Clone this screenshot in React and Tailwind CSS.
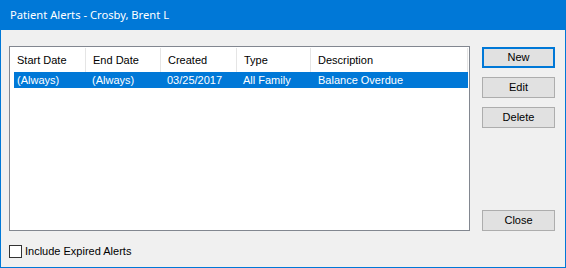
import React from 'react';

// Classic WinForms-style "Patient Alerts" dialog
const columns = [
  { key: 'start', label: 'Start Date', w: 'w-[76px]' },
  { key: 'end', label: 'End Date', w: 'w-[75px]' },
  { key: 'created', label: 'Created', w: 'w-[76px]' },
  { key: 'type', label: 'Type', w: 'w-[74px]' },
  { key: 'desc', label: 'Description', w: 'w-[157px]' },
];

const rows = [
  { start: '(Always)', end: '(Always)', created: '03/25/2017', type: 'All Family', desc: 'Balance Overdue' },
];

function DlgButton({ children, primary = false }) {
  return (
    <button
      type="button"
      className={
        primary
          ? 'flex h-[21px] w-[73px] items-center justify-center border-2 border-[#0078d7] bg-[#e1e1e1] text-[11px] text-black'
          : 'flex h-[21px] w-[73px] items-center justify-center border border-[#adadad] bg-[#e1e1e1] text-[11px] text-black'
      }
    >
      {children}
    </button>
  );
}

export default function App() {
  return (
    <div
      className="flex h-[268px] w-[566px] flex-col border-x border-b border-[#0078d7] bg-[#f0f0f0]"
      style={{ fontFamily: '"Liberation Sans", Arial, sans-serif' }}
    >
      {/* title bar */}
      <div
        className="-mx-px flex h-[30px] shrink-0 items-center bg-[#0078d7] pl-[10px] text-[11.2px] text-white"
        style={{ fontFamily: '"Noto Sans", "Open Sans", sans-serif' }}
      >
        Patient Alerts - Crosby, Brent L
      </div>

      <div className="flex flex-1 pl-[8px] pt-[16px]">
        <div className="flex flex-col">
          {/* list view */}
          <div className="h-[185px] w-[461px] border border-[#828790] bg-white">
            <div className="flex h-[25px] items-center pt-[1px]">
              {columns.map((c) => (
                <div
                  key={c.key}
                  className={`${c.w} flex h-full items-center border-r border-[#e5e5e5] pl-[7px] text-[11px] text-black`}
                >
                  {c.label}
                </div>
              ))}
            </div>
            {rows.map((r, i) => (
              <div key={i} className="ml-[4px] mr-[1px] flex h-[16px] items-center bg-[#0078d7] text-[11px] text-white">
                <div className="w-[72px] pl-[3px]">{r.start}</div>
                <div className="w-[75px] pl-[6px]">{r.end}</div>
                <div className="w-[76px] pl-[6px]">{r.created}</div>
                <div className="w-[74px] pl-[6px]">{r.type}</div>
                <div className="flex-1 pl-[7px]">{r.desc}</div>
              </div>
            ))}
          </div>

          {/* include expired checkbox */}
          <label className="mt-[12px] flex items-center gap-[3px] text-[11px] text-black">
            <span className="h-[13px] w-[13px] border border-[#333333] bg-white" />
            Include Expired Alerts
          </label>
        </div>

        {/* right button column */}
        <div className="ml-[12px] flex flex-col pt-[1px]">
          <DlgButton primary>New</DlgButton>
          <div className="mt-[9px]">
            <DlgButton>Edit</DlgButton>
          </div>
          <div className="mt-[9px]">
            <DlgButton>Delete</DlgButton>
          </div>
          <div className="mt-[82px]">
            <DlgButton>Close</DlgButton>
          </div>
        </div>
      </div>
    </div>
  );
}
